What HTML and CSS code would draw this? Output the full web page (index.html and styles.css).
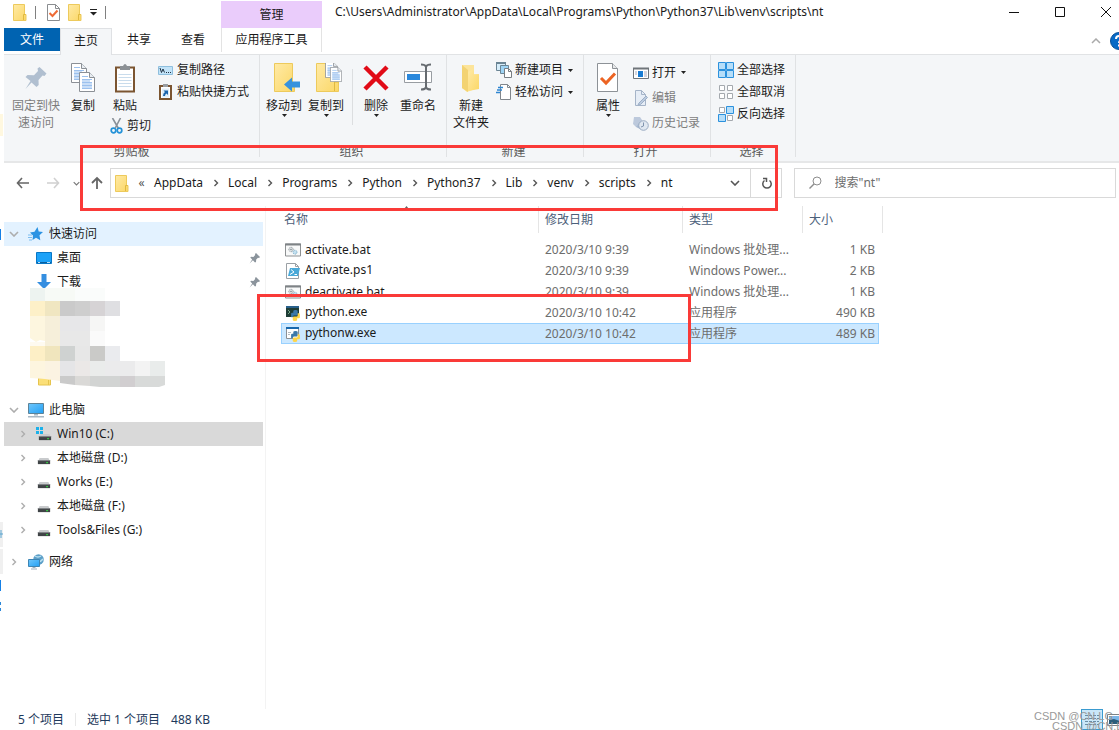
FILE: index.html
```html
<!DOCTYPE html>
<html lang="zh-CN">
	<head>
		<meta charset="UTF-8">
		<title>nt</title>
		<meta name="viewport" content="width=device-width, initial-scale=1" />
		<link rel="stylesheet" href="styles.css">
	</head>
	<body>
		<!-- 公用图标 -->
		<svg class="defs">
			<defs>
				<linearGradient id="gFolder" x1="0" y1="0" x2="1" y2="1">
					<stop offset="0" stop-color="#ffeaa6"/><stop offset="1" stop-color="#fbd766"/>
				</linearGradient>
				<linearGradient id="gBlue" x1="0" y1="0" x2="1" y2="1">
					<stop offset="0" stop-color="#6fc6fb"/><stop offset="1" stop-color="#22a0f5"/>
				</linearGradient>
				<symbol id="folder" viewBox="0 0 14 17">
					<path d="M.5.5h11v10h1.500v6H.5z" fill="url(#gFolder)" stroke="#edca5c"/>
					<path d="M10.500 16v-5.500h2" fill="none" stroke="#e0b93f"/>
				</symbol>
				<symbol id="chev" viewBox="0 0 6 8">
					<path d="M1.500 1l3 3-3 3" fill="none" stroke="currentColor" stroke-width="1.400"/>
				</symbol>
				<symbol id="down" viewBox="0 0 10 6">
					<path d="M1 1l4 4 4-4" fill="none" stroke="currentColor" stroke-width="1.600"/>
				</symbol>
				<symbol id="caret" viewBox="0 0 5 3">
					<path d="M0 0h5L2.500 3z" fill="#222"/>
				</symbol>
				<symbol id="pin" viewBox="0 0 12 12">
					<path d="M7 1l4 4-1 1-1-.2L7.200 7.600 7 10 6 10.500 3.900 8.300.6 11.400 3.200 7.600 1.300 5.600 2 4.800l2.400.2L6.200 3 6 2z" fill="currentColor"/>
				</symbol>
				<symbol id="disk" viewBox="0 0 16 16">
					<path d="M3 8h10l1.500 3h-13z" fill="#c9cbcd"/>
					<path d="M1 10.500h14V15H1z" fill="#3f4346"/>
					<path d="M1 10.500h14v1H1z" fill="#888c8f"/>
					<path d="M10.500 12.500h2v1.500h-2z" fill="#35d043"/>
				</symbol>
				<symbol id="bat" viewBox="0 0 16 14">
					<path d="M.5 1h15v12H.5z" fill="#f8f9f9" stroke="#8d9092"/>
					<path d="M0 .5h16v2H0z" fill="#7e8386"/>
					<circle cx="6" cy="6.500" r="2.200" fill="#dfe4e7" stroke="#929a9f" stroke-dasharray="1.200 .7"/>
					<circle cx="6" cy="6.500" r=".8" fill="#818b91"/>
					<circle cx="10" cy="9.200" r="2" fill="#c3e0f0" stroke="#7daec8" stroke-dasharray="1.200 .7"/>
				</symbol>
				<symbol id="snake" viewBox="0 0 10 10">
					<path d="M1 6V3.500Q1 2.500 2 2.500h1V1Q3 0 5 0t2 1v3q0 1-1 1H3.500Q2.500 5 2.500 6.500H2Q1 7 1 6z" fill="#3b78a9"/>
					<path d="M9 4v2.500q0 1-1 1H6.500V9q0 1-2 1t-2-1V7q0-1 1-1H6q1 0 1-1.500V3h1q1 0 1 1z" fill="#ffd547"/>
				</symbol>
				<symbol id="page" viewBox="0 0 16 20">
					<path d="M.5.5h10l5 5v14H.5z" fill="#fff" stroke="#8b9096"/>
					<path d="M3 7h8v3h2v7H3z" fill="#c9def7"/>
					<path d="M10.500.5v5h5" fill="#e8edf2" stroke="#8b9096"/>
					<path d="M3 4.500h6M3 7.500h10M3 10.500h10M3 13.500h10M3 16.500h10" stroke="#9cc1ee"/>
				</symbol>
			</defs>
		</svg>

		<!-- 左侧露出的后面窗口 -->
		<svg class="behind" viewBox="0 0 4 730">
			<path d="M0 114h3v22H0z" fill="#fff8e0"/>
			<path d="M0 229h1v11H0zM0 580h1v11H0z" fill="#1580e6"/>
			<path d="M0 522h3v25H0zM0 549h3v25H0z" fill="#f0f0f0"/>
			<path d="M0 534h3M1 530v8" stroke="#5ba4cf"/>
			<path d="M0 602h1v3H0zM0 608h1v3H0z" fill="#2b87d8"/>
		</svg>

		<div class="window">
			<header class="titlebar">
				<div class="quick">
					<svg width="14" height="17"><use href="#folder"/></svg>
					<i class="bar"></i>
					<button type="button" aria-label="属性">
						<svg width="13" height="17" viewBox="0 0 13 17">
							<path d="M.5.5h8l4 4v12H.5z" fill="#fff" stroke="#8a8d90"/>
							<path d="M8.500.5v4h4" fill="none" stroke="#8a8d90"/>
							<path d="M2.500 9l3 3 5-5.500" fill="none" stroke="#ee6b35" stroke-width="2"/>
						</svg>
					</button>
					<button type="button" aria-label="新建文件夹"><svg width="14" height="17"><use href="#folder"/></svg></button>
					<button type="button" aria-label="自定义">
						<svg width="7" height="7" viewBox="0 0 7 7"><path d="M0 .5h7" stroke="#222"/><path d="M0 3h7L3.500 6.500z" fill="#222"/></svg>
					</button>
					<i class="bar"></i>
				</div>
				<div class="manage">管理</div>
				<h1>C:\Users\Administrator\AppData\Local\Programs\Python\Python37\Lib\venv\scripts\nt</h1>
				<div class="controls">
					<button type="button" aria-label="最小化"><svg width="12" height="12" viewBox="0 0 12 12"><path d="M1 6.500h10" stroke="#111"/></svg></button>
					<button type="button" aria-label="最大化"><svg width="12" height="12" viewBox="0 0 12 12"><path d="M1.500 1.500h9v9h-9z" fill="none" stroke="#111"/></svg></button>
					<button type="button" aria-label="关闭"><svg width="12" height="12" viewBox="0 0 12 12"><path d="M1 1l10 10M11 1L1 11" stroke="#111"/></svg></button>
				</div>
			</header>

			<nav class="tabs">
				<button type="button" class="file">文件</button>
				<button type="button" class="active_tab">主页</button>
				<button type="button">共享</button>
				<button type="button">查看</button>
				<button type="button" class="tool">应用程序工具</button>
				<div class="help">
					<svg width="10" height="6"><path d="M1 5l4-4 4 4" fill="none" stroke="#aaa" stroke-width="1.500"/></svg>
					<svg width="18" height="18" viewBox="0 0 18 18"><circle cx="9" cy="9" r="8.500" fill="#0869c6" stroke="#0a4f96"/><path d="M6 7q0-3 3-3t3 2.500Q12 8 10 9q-1 .6-1 2M9 12.500v2" fill="none" stroke="#fff" stroke-width="2"/></svg>
				</div>
			</nav>

			<section class="ribbon">
				<div class="group clip">
					<div class="tools">
						<button type="button" class="big wide off">
							<svg width="26" height="30" viewBox="0 0 26 30">
								<path d="M16.500 4l7 6.500-2 2.500-2-.4-4 4.400.2 5-2.200 2-5-4.600L2.500 26l5-8-5-4 2-2 6.500.3 4-4.300-.5-2.500z" fill="#b0bfd0"/>
							</svg>
							<span>固定到快<br>速访问</span>
						</button>
						<button type="button" class="big">
							<svg width="26" height="30" viewBox="0 0 26 30">
								<use href="#page" x="1" y="0" width="16" height="20"/>
								<use href="#page" x="9" y="9" width="16" height="20"/>
							</svg>
							<span>复制</span>
						</button>
						<div class="paste">
							<button type="button" class="big">
								<svg width="22" height="30" viewBox="0 0 22 30">
									<path d="M2 4.500h18v24H2z" fill="#fff" stroke="#7b5531" stroke-width="2"/>
									<path d="M4.500 11.500h13M4.500 14.500h13M4.500 17.500h13M4.500 20.500h13M4.500 23.500h13" stroke="#c9dcec"/>
									<path d="M6 3h3q2-4 4 0h3v4H6z" fill="#8b9095"/>
								</svg>
								<span>粘贴</span>
							</button>
							<button type="button" class="small cut">
								<svg width="14" height="16" viewBox="0 0 14 16">
									<path d="M2.500 0l6 10.500M10.500 0L5 10.500" stroke="#8a9198" stroke-width="1.600"/>
									<circle cx="3.500" cy="12.500" r="2.300" fill="none" stroke="#2492d8" stroke-width="1.700"/>
									<circle cx="9.500" cy="12.500" r="2.300" fill="none" stroke="#2492d8" stroke-width="1.700"/>
								</svg>剪切
							</button>
						</div>
						<div class="list">
							<button type="button" class="small">
								<svg width="16" height="16" viewBox="0 0 16 16">
									<path d="M.5 4.500h14v8H.5z" fill="#c2e3f8" stroke="#8ebfde"/>
									<path d="M2 6l1.500 4.500L5 7l1.500 3.500M8 10.500h1M10 10.500h1M12 10.500h1" fill="none" stroke="#234"/>
								</svg>复制路径
							</button>
							<button type="button" class="small">
								<svg width="16" height="16" viewBox="0 0 16 16">
									<path d="M2 2h11v13H2z" fill="#fff" stroke="#7b5531" stroke-width="2"/>
									<path d="M5 0h5v3H5z" fill="#999ea3"/>
									<path d="M4 4.500h7v9H4z" fill="#e0eefa"/>
									<path d="M5 12q0-3 2-4L5.500 6.500H10V11L8.500 9.500Q7 10 7 12z" fill="#1a64ad"/>
								</svg>粘贴快捷方式
							</button>
						</div>
					</div>
					<h2>剪贴板</h2>
				</div>

				<div class="group organize">
					<div class="tools">
						<button type="button" class="big">
							<svg width="32" height="30" viewBox="0 0 32 30">
								<path d="M6.500.5h18v20h2v8h-20z" fill="url(#gFolder)" stroke="#edca5c"/>
								<path d="M16 21.500l8-7v4h8v6h-8v4z" fill="#3792dd"/>
							</svg>
							<span>移动到</span>
							<svg width="5" height="3"><use href="#caret"/></svg>
						</button>
						<button type="button" class="big">
							<svg width="32" height="30" viewBox="0 0 32 30">
								<path d="M6.500.5h18v18h4v10h-22z" fill="url(#gFolder)" stroke="#edca5c"/>
								<path d="M24.500 28v-9h4" fill="none" stroke="#e0b93f"/>
								<use href="#page" x="15" y="-1" width="13" height="16"/>
								<use href="#page" x="20" y="4" width="12" height="15"/>
							</svg>
							<span>复制到</span>
							<svg width="5" height="3"><use href="#caret"/></svg>
						</button>
						<i class="line"></i>
						<button type="button" class="big">
							<svg width="26" height="30" viewBox="0 0 26 30">
								<path d="M2 4l22 22M24 4L2 26" stroke="#e10b17" stroke-width="4.500"/>
							</svg>
							<span>删除</span>
							<svg width="5" height="3"><use href="#caret"/></svg>
						</button>
						<button type="button" class="big">
							<svg width="30" height="30" viewBox="0 0 30 30">
								<path d="M1.500 8.500h27v11h-27z" fill="#fff" stroke="#989da2"/>
								<path d="M4 11h13v6H4z" fill="#2a88dc"/>
								<path d="M18 1.500q4 0 5 2 1-2 5-2M23 3v22M18 26.500q4 0 5-2 1 2 5 2" fill="none" stroke="#666b70" stroke-width="2"/>
							</svg>
							<span>重命名</span>
						</button>
					</div>
					<h2>组织</h2>
				</div>

				<div class="group create">
					<div class="tools">
						<button type="button" class="big">
							<svg width="22" height="30" viewBox="0 0 22 30">
								<path d="M2 2h12v9h4v14l-11 4-5-4z" fill="#fce49a"/>
								<path d="M2 2l6 5v22l-6-4z" fill="#f3d372"/>
								<path d="M8 9l6-3v6l5-1v15L8 28z" fill="url(#gFolder)"/>
							</svg>
							<span>新建<br>文件夹</span>
						</button>
						<div class="list">
							<button type="button" class="small">
								<svg width="16" height="16" viewBox="0 0 16 16">
									<path d="M.5.5h9v8h-9z" fill="#d6edfa" stroke="#6b8595"/><path d="M0 1h10" stroke="#6b8595" stroke-width="2"/>
									<path d="M4.500 3.500h8v8h-8z" fill="#9ed4f5" stroke="#6b8595"/>
									<path d="M8.500 6.500h4l3 3v6h-7z" fill="#fff" stroke="#777d82"/><path d="M12.500 6.500v3h3" fill="none" stroke="#777d82"/>
								</svg>新建项目<svg width="5" height="3"><use href="#caret"/></svg>
							</button>
							<button type="button" class="small">
								<svg width="16" height="16" viewBox="0 0 16 16">
									<path d="M4.500.5h7l3 3v12h-10z" fill="#fff" stroke="#80868c"/><path d="M11.500.5v3h3" fill="none" stroke="#80868c"/>
									<path d="M2 3.500h5M1 6h5M0 8.500h4" stroke="#2f86d1" stroke-width="1.500"/>
								</svg>轻松访问<svg width="5" height="3"><use href="#caret"/></svg>
							</button>
						</div>
					</div>
					<h2>新建</h2>
				</div>

				<div class="group open">
					<div class="tools">
						<button type="button" class="big">
							<svg width="22" height="30" viewBox="0 0 22 30">
								<path d="M.5.5h15l5 5v23H.5z" fill="#fff" stroke="#8d9297"/>
								<path d="M15.500.5v5h5" fill="#e6e8ea" stroke="#8d9297"/>
								<path d="M4 15l5 5 9-9.500" fill="none" stroke="#ec6423" stroke-width="3"/>
							</svg>
							<span>属性</span>
							<svg width="5" height="3"><use href="#caret"/></svg>
						</button>
						<div class="list loose">
							<button type="button" class="small">
								<svg width="16" height="16" viewBox="0 0 16 16">
									<path d="M.5 3.500h15v10H.5z" fill="#fff" stroke="#6f757a"/><path d="M0 3.500h16" stroke="#6f757a" stroke-width="2"/>
									<path d="M5 6h5v6H5z" fill="#187bd2"/><path d="M11 7h3M11 9h3M11 11h3M2 7h2M2 9h2" stroke="#aab"/>
								</svg>打开<svg width="5" height="3"><use href="#caret"/></svg>
							</button>
							<button type="button" class="small off">
								<svg width="16" height="16" viewBox="0 0 16 16">
									<path d="M2.500.5h6l4 4v11h-10z" fill="#e6edf6" stroke="#a5b4c8"/><path d="M8.500.5v4h4" fill="none" stroke="#a5b4c8"/>
									<path d="M6 13l7-7 1.500 1.500-7 7L5 15z" fill="#bccbdf" stroke="#9cafc7"/>
								</svg>编辑
							</button>
							<button type="button" class="small off">
								<svg width="16" height="16" viewBox="0 0 16 16">
									<path d="M1 2h6l2 3-1 7H3L0 9z" fill="#bcc9dc"/><path d="M3 12l4-5 2 8z" fill="#a9bbd3"/>
									<circle cx="10.500" cy="10.500" r="4.800" fill="#e0e8f1" stroke="#9aabc2"/><path d="M10.500 7.500v3.500l-2.500 1" fill="none" stroke="#7f93ad"/>
								</svg>历史记录
							</button>
						</div>
					</div>
					<h2>打开</h2>
				</div>

				<div class="group select">
					<div class="tools">
						<div class="list">
							<button type="button" class="small">
								<svg width="16" height="16" viewBox="0 0 16 16"><path d="M.5.5h7v7h-7zM8.500.5h7v7h-7zM.5 8.500h7v7h-7zM8.500 8.500h7v7h-7z" fill="#b6def9" stroke="#2b91dd"/></svg>全部选择
							</button>
							<button type="button" class="small">
								<svg width="16" height="16" viewBox="0 0 16 16"><path d="M1.500 1.500h5v5h-5zM9.500 1.500h5v5h-5zM1.500 9.500h5v5h-5zM9.500 9.500h5v5h-5z" fill="#fff" stroke="#a4a9ae"/></svg>全部取消
							</button>
							<button type="button" class="small">
								<svg width="16" height="16" viewBox="0 0 16 16"><path d="M1.500 1.500h5v5h-5zM9.500 9.500h5v5h-5z" fill="#fff" stroke="#a4a9ae"/><path d="M8.500.5h7v7h-7zM.5 8.500h7v7h-7z" fill="#b6def9" stroke="#2b91dd"/></svg>反向选择
							</button>
						</div>
					</div>
					<h2>选择</h2>
				</div>
			</section>

			<div class="address">
				<div class="arrows">
					<button type="button" aria-label="后退"><svg width="14" height="12" viewBox="0 0 14 12"><path d="M1.500 6H13M6 1L1.500 6 6 11" fill="none" stroke="#666" stroke-width="1.600"/></svg></button>
					<button type="button" aria-label="前进"><svg width="14" height="12" viewBox="0 0 14 12"><path d="M1 6h11.500M8 1l4.500 5L8 11" fill="none" stroke="#d0d0d0" stroke-width="1.600"/></svg></button>
					<button type="button" class="recent" aria-label="最近位置"><svg width="7" height="5"><use href="#down"/></svg></button>
					<button type="button" class="up" aria-label="上移"><svg width="12" height="14" viewBox="0 0 12 14"><path d="M6 13V2M1 7l5-5 5 5" fill="none" stroke="#666" stroke-width="1.800"/></svg></button>
				</div>
				<div class="path">
					<svg width="14" height="17"><use href="#folder"/></svg>
					<span class="more">«</span>
					<a href="#">AppData</a><svg class="sep"><use href="#chev"/></svg>
					<a href="#">Local</a><svg class="sep"><use href="#chev"/></svg>
					<a href="#">Programs</a><svg class="sep"><use href="#chev"/></svg>
					<a href="#">Python</a><svg class="sep"><use href="#chev"/></svg>
					<a href="#">Python37</a><svg class="sep"><use href="#chev"/></svg>
					<a href="#">Lib</a><svg class="sep"><use href="#chev"/></svg>
					<a href="#">venv</a><svg class="sep"><use href="#chev"/></svg>
					<a href="#">scripts</a><svg class="sep"><use href="#chev"/></svg>
					<a href="#">nt</a>
					<button type="button" class="drop" aria-label="以前的位置"><svg width="10" height="6"><use href="#down"/></svg></button>
					<button type="button" class="refresh" aria-label="刷新">
						<svg width="12" height="13" viewBox="0 0 12 13"><path d="M8.500 3.500a4.200 4.200 0 1 1-5 0" fill="none" stroke="#555" stroke-width="1.500"/><path d="M2 1.500h3.500V5" fill="none" stroke="#555" stroke-width="1.500"/></svg>
					</button>
				</div>
				<label class="search">
					<svg width="13" height="14" viewBox="0 0 13 14"><circle cx="8" cy="5" r="4" fill="none" stroke="#8d8d8d"/><path d="M5 8L.5 12.500" stroke="#8d8d8d" stroke-width="1.400"/></svg>
					<input type="text" placeholder='搜索"nt"' aria-label="搜索">
				</label>
			</div>

			<main>
				<nav class="tree">
					<a href="#" class="root hot">
						<svg width="10" height="6"><use href="#down"/></svg>
						<svg width="16" height="16" viewBox="0 0 16 16"><path d="M9.500 1l1.200 4.500 4.300.5-3.500 3.200.8 5L8 11.800 4.500 14l.5-4.500L2 6.500l4.500-.7z" fill="#2b93e3"/><path d="M0 9h4M0 11.500h4M1 14h3" stroke="#7dbdf0"/></svg>
						<span>快速访问</span>
					</a>
					<a href="#">
						<svg width="16" height="16" viewBox="0 0 16 16"><path d="M.5 2.500h15v11H.5z" fill="#1ca2f8" stroke="#0877c6"/><path d="M1 12.500h14" stroke="#0b5f9e"/><path d="M2 12.500h2M11 12.500h3" stroke="#b8e2fc"/></svg>
						<span>桌面</span>
						<svg class="pinned"><use href="#pin"/></svg>
					</a>
					<a href="#">
						<svg width="16" height="16" viewBox="0 0 16 16"><path d="M5.500 0h5v8H15l-7 7-7-7h4.500z" fill="#348ee0"/></svg>
						<span>下载</span>
						<svg class="pinned"><use href="#pin"/></svg>
					</a>
					<svg class="mosaic" width="140" height="96" viewBox="0 0 140 96">
						<path d="M8.500 84h12v7h-12z" fill="#fbdf78" stroke="#e6c44e"/><path d="M18.500 86v5" stroke="#e6c44e"/>
						<path d="M0-6h15V7H0z" fill="#edf3f0"/><path d="M15-6h30V7H15z" fill="#f7faf6"/><path d="M45-6h30V7H45z" fill="#fafcfb"/>
						<path d="M0 7h15v15H0z" fill="#fdf0c8"/><path d="M15 7h15v15H15z" fill="#f0e6c1"/>
						<path d="M30 7h15v15H30z" fill="#cacaca"/><path d="M45 7h15v15H45z" fill="#cecece"/><path d="M60 7h15v15H60z" fill="#d6d3d5"/><path d="M75 7h15v15H75z" fill="#dfdfe2"/>
						<path d="M0 22h15v25l-5-1-4 2-6-4z" fill="#fdf6df"/><path d="M15 22h15v30H15z" fill="#f6efda"/><path d="M0 48h15v5H0z" fill="#fefaf0"/>
						<path d="M30 22h30v15H30z" fill="#e7e7e9"/><path d="M60 22h15v15H60z" fill="#f6f6f5"/>
						<path d="M30 37h30v15H30z" fill="#e8e8e8"/><path d="M60 37h15v15H60z" fill="#fafafa"/>
						<path d="M0 52h15v15H0z" fill="#fdefc6"/><path d="M15 52h15v15H15z" fill="#f0e5bd"/>
						<path d="M30 52h15v15H30z" fill="#cfd2d1"/><path d="M45 52h15v15H45z" fill="#e7e7e7"/><path d="M60 52h15v15H60z" fill="#cacac8"/><path d="M75 52h15v15H75z" fill="#eaebee"/>
						<path d="M0 67h15v18L0 84z" fill="#fdf5df"/><path d="M15 67h15v20l-15-2z" fill="#fbf3e2"/>
						<path d="M30 67h15v15H30z" fill="#e5e5e7"/><path d="M45 67h15v15H45z" fill="#ebe8e7"/><path d="M60 67h15v15H60z" fill="#eaeceb"/><path d="M75 67h30v15H75z" fill="#ebebec"/><path d="M105 67h15v15h-15z" fill="#f3f3f3"/><path d="M120 67h15v15h-15z" fill="#e9eceb"/>
						<path d="M30 82h15v9l-15-2z" fill="#cacaca"/><path d="M45 82h15v10l-15-1z" fill="#dad9d7"/><path d="M60 82h30v11H70l-10-1z" fill="#d2d4d3"/><path d="M90 82h15v11H90z" fill="#d1ced0"/><path d="M105 82h30v9l-6 2h-24z" fill="#d8dad9"/>
					</svg>
					<a href="#" class="root">
						<svg width="10" height="6"><use href="#down"/></svg>
						<svg width="16" height="16" viewBox="0 0 16 16"><path d="M.5 1.500h15v10H.5z" fill="url(#gBlue)" stroke="#5d8398"/><path d="M6 12h4v1.500H6zM0 14h16v1.500H0z" fill="#a9b8c4"/></svg>
						<span>此电脑</span>
					</a>
					<a href="#" class="drive current">
						<svg width="6" height="8"><use href="#chev"/></svg>
						<svg width="16" height="16" viewBox="0 0 16 16"><use href="#disk" x="2" y="1" width="14" height="14"/><path d="M0 1h3v3H0zM4 1h3v3H4zM0 5h3v3H0zM4 5h3v3H4z" fill="#1cb1ea"/></svg>
						<span>Win10 (C:)</span>
					</a>
					<a href="#" class="drive">
						<svg width="6" height="8"><use href="#chev"/></svg>
						<svg width="16" height="16" viewBox="0 0 16 16"><use href="#disk" x="1" y="1" width="14" height="14"/></svg>
						<span>本地磁盘 (D:)</span>
					</a>
					<a href="#" class="drive">
						<svg width="6" height="8"><use href="#chev"/></svg>
						<svg width="16" height="16" viewBox="0 0 16 16"><use href="#disk" x="1" y="1" width="14" height="14"/></svg>
						<span>Works (E:)</span>
					</a>
					<a href="#" class="drive">
						<svg width="6" height="8"><use href="#chev"/></svg>
						<svg width="16" height="16" viewBox="0 0 16 16"><use href="#disk" x="1" y="1" width="14" height="14"/></svg>
						<span>本地磁盘 (F:)</span>
					</a>
					<a href="#" class="drive">
						<svg width="6" height="8"><use href="#chev"/></svg>
						<svg width="16" height="16" viewBox="0 0 16 16"><use href="#disk" x="1" y="1" width="14" height="14"/></svg>
						<span>Tools&amp;Files (G:)</span>
					</a>
					<a href="#" class="root net">
						<svg width="10" height="8"><use href="#chev"/></svg>
						<svg width="16" height="16" viewBox="0 0 16 16"><circle cx="10.500" cy="5.500" r="5.300" fill="#5c9fc8"/><path d="M7 2q3 2 6 0M8 7q4 2 7-2" fill="none" stroke="#b8dff0" stroke-width="1.500"/><path d="M.5 5.500h11v7H.5z" fill="url(#gBlue)" stroke="#3d85b4"/><path d="M4.500 13h3v1h-3zM3 14.500h6v1H3z" fill="#9fb0bd"/></svg>
						<span>网络</span>
					</a>
				</nav>

				<table class="files">
					<thead>
						<tr>
							<th class="name">名称<svg class="sort" width="5" height="3"><path d="M0 3h5L2.500 0z" fill="#666"/></svg></th>
							<th class="date">修改日期</th>
							<th class="type">类型</th>
							<th class="size">大小</th>
						</tr>
					</thead>
					<tbody>
						<tr>
							<td><svg width="16" height="14"><use href="#bat"/></svg>activate.bat</td>
							<td>2020/3/10 9:39</td><td>Windows 批处理...</td><td>1 KB</td>
						</tr>
						<tr>
							<td><svg width="16" height="16" viewBox="0 0 16 16"><path d="M1.500.5h9l3 3v12h-12z" fill="#fff" stroke="#9aa0a5"/><path d="M10.500.5v3h3" fill="none" stroke="#9aa0a5"/><path d="M5 5h10l-2 8H3z" fill="#4aa9d8"/><path d="M6 6.500l3 2.500-4 2.500M9.500 11.500h2.500" fill="none" stroke="#fff"/></svg>Activate.ps1</td>
							<td>2020/3/10 9:39</td><td>Windows Power...</td><td>2 KB</td>
						</tr>
						<tr>
							<td><svg width="16" height="14"><use href="#bat"/></svg>deactivate.bat</td>
							<td>2020/3/10 9:39</td><td>Windows 批处理...</td><td>1 KB</td>
						</tr>
						<tr>
							<td><svg width="16" height="16" viewBox="0 0 16 16"><path d="M1 1h13v11H1z" fill="#1f3d36"/><path d="M1 1h13v2H1z" fill="#29618c"/><path d="M3 5l2 2-2 2" fill="none" stroke="#79a887"/><use href="#snake" x="5" y="5" width="11" height="11"/></svg>python.exe</td>
							<td>2020/3/10 10:42</td><td>应用程序</td><td>490 KB</td>
						</tr>
						<tr class="active_tr">
							<td><svg width="16" height="16" viewBox="0 0 16 16"><path d="M1.500 1.500h12v11h-12z" fill="#fff" stroke="#8a8f94"/><path d="M1 1h13v2H1z" fill="#1668ad"/><path d="M3 6.500h3M3 8.500h2" stroke="#b5babf"/><use href="#snake" x="5" y="5" width="11" height="11"/></svg>pythonw.exe</td>
							<td>2020/3/10 10:42</td><td>应用程序</td><td>489 KB</td>
						</tr>
					</tbody>
				</table>
			</main>

			<footer class="status">
				<span>5 个项目</span>
				<i class="bar"></i>
				<span>选中 1 个项目</span>
				<span>488 KB</span>
				<div class="views">
					<button type="button" class="active_view" aria-label="详细信息"><svg width="14" height="12" viewBox="0 0 14 12"><path d="M0 1.500h14M0 4.500h14M0 7.500h14M0 10.500h14" stroke="#6b8da5" stroke-dasharray="3 1"/></svg></button>
					<button type="button" aria-label="大图标"><svg width="18" height="12" viewBox="0 0 18 12"><path d="M.5.500h17v11H.5z" fill="#fff" stroke="#7d8387"/><path d="M2 2h14v6H2z" fill="#7cb7e8"/><path d="M2 6l5-1 9 3v2H2z" fill="#2c5c7a"/></svg></button>
				</div>
			</footer>
		</div>

		<!-- 标注框和水印 -->
		<div class="mark mark_path"></div>
		<div class="mark mark_file"></div>
		<div class="water water_a">CSDN @CN.LG</div>
		<div class="water water_b">CSDN @CN.LG</div>
	</body>
</html>
```
FILE: styles.css
```css
*{box-sizing: border-box;}
html,body,h1,h2{margin: 0; padding: 0;}
body{
	position: relative;
	display: flex;
	height: 100vh;
	overflow: hidden;
	background: #fff;
	color: #1a1a1a;
	font: 12px/16px "Noto Sans", "Noto Sans CJK SC", sans-serif;
}
h1,h2,th{font-size: 12px; font-weight: normal;}
a{color: inherit; text-decoration: none;}
button{
	margin: 0;
	padding: 0;
	border: 0;
	background: none;
	color: inherit;
	font: inherit;
}
svg{flex: none; display: block;}
.defs{position: absolute; width: 0; height: 0;}
.behind{width: 4px; height: 730px;}
.window{
	flex: 1;
	min-width: 0;
	display: flex;
	flex-direction: column;
}
.bar{width: 1px; height: 13px; background: #808080;}

/* 标题栏 */
.titlebar{
	display: flex;
	height: 28px;
}
.quick{
	width: 217px;
	height: 24px;
	padding-left: 9px;
	display: flex;
	align-items: center;
	gap: 8px;
}
.quick button:nth-of-type(1){margin-left: 3px;}
.manage{
	width: 101px;
	height: 27px;
	margin-top: 1px;
	background: #eaccfb;
	line-height: 27px;
	text-align: center;
}
.titlebar h1{
	flex: 1;
	margin-left: 13px;
	line-height: 24px;
	white-space: nowrap;
}
.controls{display: flex; height: 24px;}
.controls button{
	width: 46px;
	display: flex;
	align-items: center;
	justify-content: center;
}
.controls button:last-child{width: 36px; padding-left: 10px;}

/* 选项卡 */
.tabs{
	display: flex;
	height: 26px;
}
.tabs>button{
	width: 54px;
	height: 24px;
}
.tabs .file{
	width: 56px;
	height: 23px;
	background: #0063b1;
	color: #fff;
}
.tabs .active_tab{
	position: relative;
	z-index: 1;
	width: 52px;
	height: 27px;
	padding-bottom: 3px;
	border: 1px solid #dfe1e4;
	border-bottom: 0;
	background: #f4f6f8;
}
.tabs .tool{
	width: 101px;
	margin-left: 1px;
	border: solid #e3e3e3;
	border-width: 0 1px;
}
.help{
	display: flex;
	align-items: center;
	gap: 9px;
	margin-left: auto;
	margin-right: -9px;
}

/* 功能区 */
.ribbon{
	display: flex;
	height: 109px;
	border-top: 1px solid #e1e3e5;
	border-bottom: 2px solid #e6e7e8;
	background: #f4f6f8;
}
.group{
	display: flex;
	flex-direction: column;
	margin-bottom: 4px;
	padding-left: 3px;
	border-right: 1px solid #e0e2e4;
}
.clip{width: 256px; padding-left: 6px;}
.organize{width: 187px;}
.create{width: 137px;}
.open{width: 127px;}
.select{width: 85px;}
.tools{flex: 1; display: flex;}
.group h2{
	margin: 0 0 -3px -6px;
	color: #5a5a5a;
	text-align: center;
	line-height: 16px;
}
.big{
	width: 42px;
	padding-top: 8px;
	display: flex;
	flex-direction: column;
	align-items: center;
	line-height: 17px;
	white-space: nowrap;
}
.big span{margin-top: 4px;}
.wide{width: 52px;}
.ribbon .off{color: #7d7d7d;}
.small{
	height: 22px;
	display: flex;
	align-items: center;
	gap: 3px;
	white-space: nowrap;
}
.small svg:last-child:not(:first-child){margin-left: 2px;}
.paste{margin-right: 7px;}
.cut{padding: 2px 0 0 6px;}
.list{padding-top: 4px;}
.create .list,.open .list,.select .list{margin-left: 4px;}
.tools .loose{padding-top: 5px;}
.loose .small{height: 25px;}
.line{
	width: 1px;
	height: 56px;
	margin: 14px 2px 0 5px;
	background: #dcdee0;
}

/* 地址栏 */
.address{
	display: flex;
	padding: 5px 3px 0 0;
}
.arrows{
	width: 106px;
	display: flex;
	align-items: center;
	padding-left: 12px;
	gap: 16px;
}
.recent{color: #777;}
.arrows .recent{margin-left: -3px;}
.arrows .up{margin-left: -5px;}
.path{
	flex: 1;
	min-width: 0;
	height: 30px;
	display: flex;
	align-items: center;
	padding-left: 4px;
	border: 1px solid #d9d9d9;
}
.more{width: 25px; text-align: center; color: #555;}
.sep{
	width: 6px;
	height: 8px;
	margin: 0 9px 0 10px;
	color: #555;
}
.drop{width: 30px; margin-left: auto; padding-left: 10px; color: #555;}
.refresh{
	align-self: stretch;
	width: 31px;
	padding-left: 10px;
	border-left: 1px solid #d9d9d9;
}
.search{
	width: 29%;
	margin-left: 12px;
	display: flex;
	align-items: center;
	gap: 13px;
	padding-left: 14px;
	border: 1px solid #d9d9d9;
}
.search input{
	flex: 1;
	min-width: 0;
	padding: 0;
	border: 0;
	outline: 0;
	font: inherit;
}
.search input::placeholder{color: #6d6d6d;}

/* 导航树和文件列表 */
main{
	flex: 1;
	min-height: 0;
	display: flex;
	padding-top: 8px;
}
.tree{
	width: 262px;
	padding-top: 16px;
	border-right: 1px solid #f3f3f3;
}
.tree a{
	display: flex;
	align-items: center;
	gap: 5px;
	height: 24px;
	width: 259px;
	padding-left: 32px;
}
.tree .root{padding-left: 5px; gap: 9px;}
.tree .root span{margin-left: -4px;}
.tree .drive{padding-left: 16px;}
.tree .drive svg:first-child{margin-right: 5px;}
.tree a>svg:first-child{color: #adadad;}
.tree .hot{background: #e3f2ff;}
.tree .current{background: #d9d9d9;}
.tree .net{margin-top: 8px;}
.tree .pinned{
	width: 12px;
	height: 12px;
	margin-left: auto;
	margin-right: 2px;
	color: #8b949c;
}
.mosaic{
	position: relative;
	margin: 0 0 8px 26px;
	overflow: visible;
}
.files{
	width: 602px;
	align-self: flex-start;
	margin-left: 15px;
	border-collapse: separate;
	border-spacing: 0;
	table-layout: fixed;
}
.files th{
	position: relative;
	height: 27px;
	padding: 0 0 0 6px;
	border-right: 1px solid #e5e5e5;
	color: #4c607a;
	text-align: left;
}
.files .name{width: 258px; padding-left: 3px;}
.files .date{width: 144px;}
.files .type{width: 120px;}
.sort{
	position: absolute;
	top: 0;
	left: 48%;
}
.files tbody::before{content: ""; display: block; height: 6px;}
.files td{
	height: 21px;
	padding: 0 0 0 6px;
	color: #6d6d6d;
	white-space: nowrap;
}
.files td:first-child{padding-left: 4px; color: #1a1a1a;}
.files td:first-child svg{
	display: inline-block;
	margin-right: 4px;
	vertical-align: middle;
}
.files td:last-child{
	padding-right: 4px;
	border-right: 4px solid #fff;
	text-align: right;
}
.active_tr td{
	background: #cce8ff;
	background-clip: padding-box;
	box-shadow: inset 0 1px #99d1ff, inset 0 -1px #99d1ff;
}
.active_tr td:first-child{box-shadow: inset 0 1px #99d1ff, inset 0 -1px #99d1ff, inset 1px 0 #99d1ff;}
.active_tr td:last-child{box-shadow: inset 0 1px #99d1ff, inset 0 -1px #99d1ff, inset -1px 0 #99d1ff;}

/* 状态栏 */
.status{
	display: flex;
	align-items: center;
	gap: 11px;
	height: 21px;
	padding-left: 14px;
	color: #1e395b;
}
.status .bar{background: #e8e8e8;}
.views{
	display: flex;
	align-self: stretch;
	gap: 4px;
	margin-left: auto;
	margin-right: -6px;
}
.active_view{
	width: 22px;
	padding-left: 3px;
	border: 1px solid #3a9bd0;
	background: #c9e7f8;
}

/* 标注 */
.mark{
	position: absolute;
	border: 3px solid #fa3a38;
}
.mark_path{left: 80px; top: 145px; width: 698px; height: 66px;}
.mark_file{left: 257px; top: 294px; width: 434px; height: 68px;}
.water{
	position: absolute;
	color: #999;
	font: 11px/12px "Liberation Sans", sans-serif;
	white-space: nowrap;
}
.water_a{left: 1034px; top: 710px;}
.water_b{left: 1052px; top: 720px;}
```
